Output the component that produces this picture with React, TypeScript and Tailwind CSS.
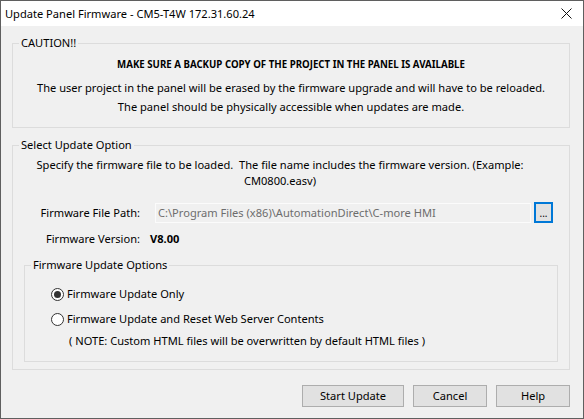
import React from "react";

const font = { fontFamily: '"Noto Sans", "Segoe UI", sans-serif' };

const GroupBox: React.FC<{
  label: string;
  className?: string;
  children: React.ReactNode;
}> = ({ label, className, children }) => {
  return (
    <fieldset className={"border border-[#dcdcdc] " + (className || "")}>
      <legend className="ml-[6px] px-[2px] leading-[16px]">{label}</legend>
      {children}
    </fieldset>
  );
};

const Radio: React.FC<{ checked?: boolean; label: string; className?: string }> = ({
  checked,
  label,
  className,
}) => {
  return (
    <div className={"flex items-center h-[16px] " + (className || "")}>
      <span className="w-[13px] h-[13px] rounded-full border border-[#333] bg-white flex items-center justify-center">
        {checked ? <span className="w-[7px] h-[7px] rounded-full bg-[#333]"></span> : null}
      </span>
      <span className="ml-[3px] leading-[16px]">{label}</span>
    </div>
  );
};

const Button: React.FC<{ label: string; className?: string }> = ({ label, className }) => {
  return (
    <button
      className={
        "h-[22px] border border-[#adadad] bg-[#e1e1e1] leading-[16px] text-black " + (className || "")
      }
    >
      {label}
    </button>
  );
};

export default function App() {
  return (
    <div
      className="w-[584px] h-[419px] border border-[#5f5f5f] bg-[#f0f0f0] flex flex-col text-[11.1px] text-black overflow-hidden"
      style={font}
    >
      <div className="h-[25px] bg-white flex items-center justify-between pl-[4px] pr-[11px]">
        <span className="leading-[16px]">Update Panel Firmware - CM5-T4W 172.31.60.24</span>
        <svg width="11" height="11" viewBox="0 0 11 11">
          <path d="M0.5 0.5 L10.5 10.5 M10.5 0.5 L0.5 10.5" stroke="#111" strokeWidth="1" />
        </svg>
      </div>

      <div className="flex flex-col pl-[11px] mt-[9px]">
        <GroupBox label="CAUTION!!" className="w-[558px] pb-[12px]">
          <div className="flex flex-col items-center text-center">
            <div className="mt-[6px] leading-[16px] font-bold text-[9.7px]">
              MAKE SURE A BACKUP COPY OF THE PROJECT IN THE PANEL IS AVAILABLE
            </div>
            <div className="mt-[7px] leading-[16px]">
              The user project in the panel will be erased by the firmware upgrade and will have to be reloaded.
            </div>
            <div className="mt-[3px] leading-[16px]">
              The panel should be physically accessible when updates are made.
            </div>
          </div>
        </GroupBox>

        <GroupBox label="Select Update Option" className="w-[558px] mt-[9px] pb-[7px]">
          <div className="mt-[4px] ml-[20px] w-[494px] text-center leading-[16px]">
            Specify the firmware file to be loaded.&nbsp; The file name includes the firmware version. (Example:
            <br />
            CM0800.easv)
          </div>

          <div className="flex items-center mt-[13px]">
            <span className="w-[127px] text-right leading-[16px]">Firmware File Path:</span>
            <div className="ml-[15px] w-[376px] h-[20px] border border-[#fbfbfb] flex items-center pl-[2px] text-[#6d6d6d] leading-[16px]">
              C:\Program Files (x86)\AutomationDirect\C-more HMI
            </div>
            <button className="ml-[3px] w-[19px] h-[21px] border-2 border-[#0078d7] bg-[#e1e1e1] flex items-end justify-center pb-[3px]">
              <span className="text-[10px] leading-[10px]">...</span>
            </button>
          </div>

          <div className="flex items-center mt-[8px]">
            <span className="w-[127px] text-right leading-[16px]">Firmware Version:</span>
            <span className="ml-[10px] font-bold leading-[16px]">V8.00</span>
          </div>

          <GroupBox label="Firmware Update Options" className="ml-[11px] w-[534px] mt-[10px] pb-[12px]">
            <div className="flex flex-col pl-[26px]">
              <Radio checked label="Firmware Update Only" className="mt-[13px]" />
              <Radio label="Firmware Update and Reset Web Server Contents" className="mt-[9px]" />
              <div className="mt-[6px] ml-[18px] leading-[16px]">
                ( NOTE: Custom HTML files will be overwritten by default HTML files )
              </div>
            </div>
          </GroupBox>
        </GroupBox>

        <div className="flex justify-end mt-[15px] w-[558px] gap-[9px]">
          <Button label="Start Update" className="w-[102px]" />
          <Button label="Cancel" className="w-[74px]" />
          <Button label="Help" className="w-[74px]" />
        </div>
      </div>
    </div>
  );
}
